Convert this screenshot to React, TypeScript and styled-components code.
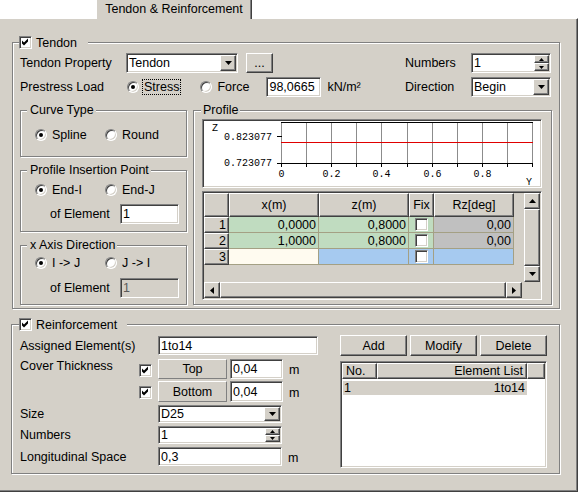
import React from "react";
import styled, { createGlobalStyle, css } from "styled-components";

const FACE = "#d4d0c8";
const SHADOW = "#808080";
const DARK = "#404040";
const GRID_LINE = "#a4a084";

const GlobalStyle = createGlobalStyle`
  html, body { margin: 0; padding: 0; background: #fff; }
  body {
    font-family: "Liberation Sans", Arial, sans-serif;
    font-size: 12.5px;
    color: #000;
  }
  *, *::before, *::after { box-sizing: border-box; }
`;

const raised = css`
  background: ${FACE};
  border: 1px solid;
  border-color: #fff ${DARK} ${DARK} #fff;
  box-shadow: inset -1px -1px ${SHADOW};
`;

const sunken = css`
  border: 1px solid;
  border-color: ${SHADOW} #fff #fff ${SHADOW};
  box-shadow: inset 1px 1px ${DARK}, inset -1px -1px ${FACE};
`;

const Window = styled.div`
  width: 578px;
  height: 492px;
  display: flex;
  flex-direction: column;
  background: #fff;
`;

const TabStrip = styled.div`
  height: 18px;
  flex: none;
  display: flex;
  align-items: flex-end;
  padding-left: 96px;
`;

const Tab = styled.div`
  position: relative;
  z-index: 1;
  width: 156px;
  height: 19px;
  margin-bottom: -1px;
  background: ${FACE};
  border-left: 1px solid #fff;
  border-right: 1px solid ${DARK};
  box-shadow: inset -1px 0 ${SHADOW};
  display: flex;
  align-items: center;
  justify-content: center;
  padding-bottom: 1px;
  white-space: nowrap;
`;

const Panel = styled.div`
  flex: 1;
  background: ${FACE};
  border-top: 1px solid #fff;
  border-right: 1px solid ${DARK};
  border-bottom: 1px solid ${DARK};
  box-shadow: inset -1px -1px ${SHADOW};
  display: flex;
  flex-direction: column;
`;

const Group = styled.fieldset<{ $w: number; $h: number; $pad?: string; $mt?: number; $ml?: number }>`
  margin: ${(p) => p.$mt ?? 0}px 0 0 ${(p) => p.$ml ?? 0}px;
  min-inline-size: 0;
  width: ${(p) => p.$w}px;
  height: ${(p) => p.$h}px;
  padding: ${(p) => p.$pad ?? "0"};
  border: 1px solid ${SHADOW};
  box-shadow: inset 1px 1px #fff, 1px 1px #fff;
  flex: none;
  display: flex;
  flex-direction: column;
`;

const Caption = styled.legend<{ $ml?: number; $pl?: number; $pr?: number }>`
  display: flex;
  align-items: center;
  height: 13px;
  line-height: 13px;
  margin-left: ${(p) => p.$ml ?? 0}px;
  padding: 0 ${(p) => p.$pr ?? 2}px 0 ${(p) => p.$pl ?? 2}px;
  background: ${FACE};
  white-space: nowrap;
`;

const Row = styled.div<{ $h: number; $mt?: number; $ml?: number }>`
  display: flex;
  align-items: center;
  flex: none;
  height: ${(p) => p.$h}px;
  margin-top: ${(p) => p.$mt ?? 0}px;
  margin-left: ${(p) => p.$ml ?? 0}px;
`;

const Column = styled.div<{ $w?: number; $mt?: number }>`
  display: flex;
  flex-direction: column;
  flex: none;
  width: ${(p) => (p.$w ? `${p.$w}px` : "auto")};
  margin-top: ${(p) => p.$mt ?? 0}px;
`;

const Split = styled.div<{ $mt?: number; $gap?: number }>`
  display: flex;
  align-items: flex-start;
  gap: ${(p) => p.$gap ?? 0}px;
  margin-top: ${(p) => p.$mt ?? 0}px;
`;

const Label = styled.span<{ $w?: number; $ml?: number; $self?: string; $mb?: number; $auto?: boolean }>`
  display: block;
  flex: none;
  white-space: nowrap;
  line-height: 14px;
  width: ${(p) => (p.$w ? `${p.$w}px` : "auto")};
  margin-left: ${(p) => (p.$auto ? "auto" : `${p.$ml ?? 0}px`)};
  margin-bottom: ${(p) => p.$mb ?? 0}px;
  align-self: ${(p) => p.$self ?? "auto"};
`;

const FocusText = styled.span<{ $ml?: number }>`
  display: block;
  flex: none;
  margin-left: ${(p) => p.$ml ?? 0}px;
  height: 16px;
  line-height: 14px;
  padding: 0 1px;
  border: 1px dotted #000;
`;

const Field = styled.div<{ $w: number; $h?: number; $ml?: number; $off?: boolean }>`
  ${sunken};
  flex: none;
  width: ${(p) => p.$w}px;
  height: ${(p) => p.$h ?? 20}px;
  margin-left: ${(p) => p.$ml ?? 0}px;
  padding: 1px 1px 1px 2px;
  display: flex;
  align-items: center;
  background: ${(p) => (p.$off ? FACE : "#fff")};
  color: ${(p) => (p.$off ? "#5a5a5a" : "#000")};
`;

const FieldText = styled.span`
  flex: 1;
  white-space: nowrap;
  overflow: hidden;
  line-height: 14px;
`;

const DropBtn = styled.div`
  ${raised};
  flex: none;
  width: 16px;
  height: 100%;
  display: flex;
  align-items: center;
  justify-content: center;
`;

const SpinStack = styled.div`
  flex: none;
  width: 15px;
  height: 100%;
  display: flex;
  flex-direction: column;
`;

const SpinBtn = styled.div`
  ${raised};
  flex: 1;
  display: flex;
  align-items: center;
  justify-content: center;
`;

const Button = styled.div<{ $w: number; $h: number; $ml?: number }>`
  ${raised};
  flex: none;
  width: ${(p) => p.$w}px;
  height: ${(p) => p.$h}px;
  margin-left: ${(p) => p.$ml ?? 0}px;
  display: flex;
  align-items: center;
  justify-content: center;
  white-space: nowrap;
`;

const Tag = styled.div<{ $w: number; $h: number; $ml?: number }>`
  flex: none;
  width: ${(p) => p.$w}px;
  height: ${(p) => p.$h}px;
  margin-left: ${(p) => p.$ml ?? 0}px;
  border: 1px solid;
  border-color: #fff ${SHADOW} ${SHADOW} #fff;
  display: flex;
  align-items: center;
  justify-content: center;
`;

const RadioDot = styled.span<{ $on?: boolean; $ml?: number }>`
  flex: none;
  width: 12px;
  height: 12px;
  margin-left: ${(p) => p.$ml ?? 0}px;
  border-radius: 50%;
  background: #fff;
  border: 1px solid;
  border-color: ${SHADOW} #fff #fff ${SHADOW};
  box-shadow: inset 1px 1px ${DARK}, inset -1px -1px ${FACE};
  display: flex;
  align-items: center;
  justify-content: center;
  &::after {
    content: "";
    width: 4px;
    height: 4px;
    border-radius: 50%;
    background: ${(p) => (p.$on ? "#000" : "transparent")};
  }
`;

const CheckFrame = styled.span<{ $ml?: number; $mt?: number }>`
  ${sunken};
  flex: none;
  width: 13px;
  height: 13px;
  margin-left: ${(p) => p.$ml ?? 0}px;
  margin-top: ${(p) => p.$mt ?? 0}px;
  background: #fff;
  display: flex;
  align-items: center;
  justify-content: center;
`;

const Arrow = ({ dir, small }: { dir: "up" | "down" | "left" | "right"; small?: boolean }) => {
  const a = small ? 5 : 7;
  const b = small ? 3 : 4;
  const vertical = dir === "up" || dir === "down";
  const pts = {
    up: `0,${b} ${a},${b} ${a / 2},0`,
    down: `0,0 ${a},0 ${a / 2},${b}`,
    left: `${b},0 ${b},${a} 0,${a / 2}`,
    right: `0,0 0,${a} ${b},${a / 2}`,
  }[dir];
  return (
    <svg width={vertical ? a : b} height={vertical ? b : a}>
      <polygon points={pts} fill="#000" />
    </svg>
  );
};

const Check = ({ on = true, ml, mt }: { on?: boolean; ml?: number; mt?: number }) => (
  <CheckFrame $ml={ml} $mt={mt}>
    {on && (
      <svg width="9" height="9" viewBox="0 0 9 9">
        <polygon points="1,2.5 3,4.5 7,0.5 7,3.5 3,7.5 1,5.5" fill="#000" />
      </svg>
    )}
  </CheckFrame>
);

const Combo = ({ w, h = 20, value, ml }: { w: number; h?: number; value: string; ml?: number }) => (
  <Field $w={w} $h={h} $ml={ml}>
    <FieldText>{value}</FieldText>
    <DropBtn>
      <Arrow dir="down" />
    </DropBtn>
  </Field>
);

const Spin = ({ w, h = 20, value }: { w: number; h?: number; value: string }) => (
  <Field $w={w} $h={h}>
    <FieldText>{value}</FieldText>
    <SpinStack>
      <SpinBtn>
        <Arrow dir="up" small />
      </SpinBtn>
      <SpinBtn>
        <Arrow dir="down" small />
      </SpinBtn>
    </SpinStack>
  </Field>
);

/* ---------- profile chart ---------- */

const ChartBox = styled.div`
  ${sunken};
  flex: none;
  width: 340px;
  height: 69px;
  padding: 1px;
  background: #fff;
  svg {
    display: block;
  }
`;

const ProfileChart = () => {
  const x0 = 77;
  const x1 = 328;
  const top = 1;
  const bottom = 42;
  const xs = Array.from({ length: 11 }, (_, i) => Math.round(x0 + ((x1 - x0) * i) / 10) + 0.5);
  const mono = { fontFamily: "'Liberation Mono', 'DejaVu Sans Mono', monospace", fontSize: 10 };
  return (
    <svg width="336" height="65" viewBox="0 0 336 65" shapeRendering="crispEdges">
      {xs.map((x, i) => (
        <line key={`g${i}`} x1={x} x2={x} y1={top} y2={bottom} stroke="#8c8c8c" />
      ))}
      <line x1={x0} x2={x1 + 1} y1={top + 0.5} y2={top + 0.5} stroke="#000" />
      <line x1={x0} x2={x1 + 1} y1={bottom + 0.5} y2={bottom + 0.5} stroke="#000" />
      {xs.map((x, i) => (
        <line key={`t${i}`} x1={x} x2={x} y1={bottom} y2={bottom + 4} stroke="#000" />
      ))}
      <line x1={73} x2={78} y1={15.5} y2={15.5} stroke="#000" />
      <line x1={73} x2={78} y1={42.5} y2={42.5} stroke="#000" />
      <line x1={x0} x2={x1 + 1} y1={21.5} y2={21.5} stroke="#e00000" />
      <g style={mono} fill="#000" shapeRendering="auto">
        <text x="8" y="10">Z</text>
        <text x="20" y="18.5">0.823077</text>
        <text x="20" y="44.5">0.723077</text>
        {["0", "0.2", "0.4", "0.6", "0.8"].map((t, i) => (
          <text key={t} x={xs[i * 2]} y="55.5" textAnchor="middle">
            {t}
          </text>
        ))}
        <text x="325" y="63.5" textAnchor="middle">Y</text>
      </g>
    </svg>
  );
};

/* ---------- profile grid ---------- */

const GridFrame = styled.div`
  ${sunken};
  flex: none;
  width: 340px;
  height: 109px;
  margin-top: 3px;
  padding: 1px;
  background: ${FACE};
  display: flex;
  flex-direction: column;
`;

const GridTop = styled.div`
  display: flex;
  height: 89px;
  flex: none;
`;

const GridBottom = styled.div`
  display: flex;
  height: 16px;
  flex: none;
`;

const TableArea = styled.div`
  width: 318px;
  flex: none;
  display: flex;
  flex-direction: column;
`;

const TableRow = styled.div<{ $h: number }>`
  display: flex;
  flex: none;
  height: ${(p) => p.$h}px;
`;

const HeadCell = styled.div<{ $w: number; $right?: boolean }>`
  ${raised};
  flex: none;
  width: ${(p) => p.$w}px;
  height: 100%;
  display: flex;
  align-items: center;
  justify-content: ${(p) => (p.$right ? "flex-end" : "center")};
  padding: 0 2px;
  line-height: 14px;
`;

const Cell = styled.div<{ $w: number; $bg: string; $center?: boolean }>`
  flex: none;
  width: ${(p) => p.$w}px;
  height: 100%;
  background: ${(p) => p.$bg};
  border-right: 1px solid ${GRID_LINE};
  border-bottom: 1px solid ${GRID_LINE};
  display: flex;
  align-items: center;
  justify-content: ${(p) => (p.$center ? "center" : "flex-end")};
  padding-right: ${(p) => (p.$center ? 0 : 2)}px;
  line-height: 14px;
`;

const VScroll = styled.div`
  width: 18px;
  flex: none;
  padding-left: 2px;
  display: flex;
  flex-direction: column;
`;

const HScroll = styled.div`
  width: 318px;
  flex: none;
  display: flex;
`;

const ScrollBtn = styled.div<{ $w: number; $h: number }>`
  ${raised};
  flex: none;
  width: ${(p) => p.$w}px;
  height: ${(p) => p.$h}px;
  display: flex;
  align-items: center;
  justify-content: center;
`;

const Thumb = styled.div`
  ${raised};
  flex: 1;
`;

const GREEN = "#c0dcc0";
const GREY = "#c0c0c0";
const CREAM = "#fffbf0";
const BLUE = "#a6caf0";

const points = [
  { n: 1, x: "0,0000", z: "0,8000", rz: "0,00", fresh: false },
  { n: 2, x: "1,0000", z: "0,8000", rz: "0,00", fresh: false },
  { n: 3, x: "", z: "", rz: "", fresh: true },
];

const ProfileGrid = () => (
  <GridFrame>
    <GridTop>
      <TableArea>
        <TableRow $h={24}>
          <HeadCell $w={25} />
          <HeadCell $w={90}>x(m)</HeadCell>
          <HeadCell $w={90}>z(m)</HeadCell>
          <HeadCell $w={25}>Fix</HeadCell>
          <HeadCell $w={80}>Rz[deg]</HeadCell>
        </TableRow>
        {points.map((p) => (
          <TableRow key={p.n} $h={16}>
            <HeadCell $w={25} $right>
              {p.n}
            </HeadCell>
            <Cell $w={90} $bg={p.fresh ? CREAM : GREEN}>
              {p.x}
            </Cell>
            <Cell $w={90} $bg={p.fresh ? BLUE : GREEN}>
              {p.z}
            </Cell>
            <Cell $w={25} $bg={p.fresh ? BLUE : GREEN} $center>
              <Check on={false} />
            </Cell>
            <Cell $w={80} $bg={p.fresh ? BLUE : GREY}>
              {p.rz}
            </Cell>
          </TableRow>
        ))}
      </TableArea>
      <VScroll>
        <ScrollBtn $w={16} $h={16}>
          <Arrow dir="up" />
        </ScrollBtn>
        <Thumb />
        <ScrollBtn $w={16} $h={16}>
          <Arrow dir="down" />
        </ScrollBtn>
      </VScroll>
    </GridTop>
    <GridBottom>
      <HScroll>
        <ScrollBtn $w={16} $h={16}>
          <Arrow dir="left" />
        </ScrollBtn>
        <Thumb />
        <ScrollBtn $w={16} $h={16}>
          <Arrow dir="right" />
        </ScrollBtn>
      </HScroll>
    </GridBottom>
  </GridFrame>
);

/* ---------- reinforcement list ---------- */

const ListBox = styled.div`
  ${sunken};
  flex: none;
  width: 207px;
  height: 107px;
  margin-top: 5px;
  padding: 1px;
  background: #fff;
  display: flex;
  flex-direction: column;
`;

const ListHead = styled.div`
  display: flex;
  height: 16px;
  flex: none;
`;

const ListHeadCell = styled.div<{ $w?: number; $right?: boolean }>`
  ${raised};
  flex: ${(p) => (p.$w ? "none" : "1")};
  width: ${(p) => (p.$w ? `${p.$w}px` : "auto")};
  height: 100%;
  display: flex;
  align-items: center;
  justify-content: ${(p) => (p.$right ? "flex-end" : "flex-start")};
  padding: 0 3px;
  line-height: 14px;
`;

const ListItem = styled.div`
  display: flex;
  align-items: center;
  justify-content: space-between;
  flex: none;
  width: 184px;
  height: 14px;
  margin: 2px 0 0 1px;
  padding: 0 2px 0 1px;
  background: ${FACE};
  line-height: 14px;
`;

export default function App() {
  return (
    <Window>
      <GlobalStyle />
      <TabStrip>
        <Tab>Tendon &amp; Reinforcement</Tab>
      </TabStrip>
      <Panel>
        <Group $w={548} $h={273} $mt={17} $ml={12} $pad="4px 8px 0 7px">
          <Caption $ml={-1} $pl={0} $pr={11}>
            <Check />
            <Label $ml={4}>Tendon</Label>
          </Caption>

          <Row $h={20}>
            <Label $w={106}>Tendon Property</Label>
            <Combo w={112} value="Tendon" />
            <Button $w={27} $h={20} $ml={8}>
              ...
            </Button>
            <Label $w={66} $auto>
              Numbers
            </Label>
            <Spin w={80} value="1" />
          </Row>

          <Row $h={20} $mt={4}>
            <Label $w={106}>Prestress Load</Label>
            <RadioDot $on $ml={1} />
            <FocusText $ml={3}>Stress</FocusText>
            <RadioDot $ml={19} />
            <Label $w={49} $ml={5}>
              Force
            </Label>
            <Field $w={55}>
              <FieldText>98,0665</FieldText>
            </Field>
            <Label $ml={6}>kN/m²</Label>
            <Label $w={66} $auto>
              Direction
            </Label>
            <Combo w={80} value="Begin" />
          </Row>

          <Split $mt={7} $gap={6}>
            <Column $w={167}>
              <Group $w={167} $h={53} $pad="0 0 0 6px">
                <Caption $pl={3} $pr={2}>
                  Curve Type
                </Caption>
                <Row $h={16} $mt={10} $ml={8}>
                  <RadioDot $on />
                  <Label $w={53} $ml={5}>
                    Spline
                  </Label>
                  <RadioDot />
                  <Label $ml={5}>Round</Label>
                </Row>
              </Group>

              <Group $w={167} $h={68} $mt={7} $pad="0 0 0 6px">
                <Caption $pl={3} $pr={2}>
                  Profile Insertion Point
                </Caption>
                <Row $h={16} $mt={5} $ml={8}>
                  <RadioDot $on />
                  <Label $w={53} $ml={5}>
                    End-I
                  </Label>
                  <RadioDot />
                  <Label $ml={5}>End-J</Label>
                </Row>
                <Row $h={20} $mt={6} $ml={8}>
                  <Label $w={70} $ml={15}>
                    of Element
                  </Label>
                  <Field $w={59}>
                    <FieldText>1</FieldText>
                  </Field>
                </Row>
              </Group>

              <Group $w={167} $h={66} $mt={7} $pad="0 0 0 6px">
                <Caption $pl={3} $pr={2}>
                  x Axis Direction
                </Caption>
                <Row $h={16} $mt={3} $ml={8}>
                  <RadioDot $on />
                  <Label $w={53} $ml={5}>
                    I -&gt; J
                  </Label>
                  <RadioDot />
                  <Label $ml={5}>J -&gt; I</Label>
                </Row>
                <Row $h={20} $mt={7} $ml={8}>
                  <Label $w={70} $ml={15}>
                    of Element
                  </Label>
                  <Field $w={59} $off>
                    <FieldText>1</FieldText>
                  </Field>
                </Row>
              </Group>
            </Column>

            <Group $w={359} $h={201} $pad="2px 0 0 8px">
              <Caption $ml={-1} $pl={2} $pr={2}>
                Profile
              </Caption>
              <ChartBox>
                <ProfileChart />
              </ChartBox>
              <ProfileGrid />
            </Group>
          </Split>
        </Group>

        <Group $w={549} $h={156} $mt={9} $ml={11} $pad="0 8px 0 8px">
          <Caption $ml={-1} $pl={0} $pr={10}>
            <Check />
            <Label $ml={4}>Reinforcement</Label>
          </Caption>

          <Split>
            <Column $w={320}>
              <Row $h={19} $mt={5}>
                <Label $w={138}>Assigned Element(s)</Label>
                <Field $w={160} $h={19}>
                  <FieldText>1to14</FieldText>
                </Field>
              </Row>
              <Row $h={20} $mt={4}>
                <Label $w={119} $self="flex-start">
                  Cover Thickness
                </Label>
                <Check mt={2} />
                <Tag $w={69} $h={20} $ml={6}>
                  Top
                </Tag>
                <Field $w={53} $ml={3}>
                  <FieldText>0,04</FieldText>
                </Field>
                <Label $ml={6} $self="flex-end" $mb={2}>
                  m
                </Label>
              </Row>
              <Row $h={21} $mt={2}>
                <Label $w={119} />
                <Check mt={2} />
                <Tag $w={69} $h={21} $ml={6}>
                  Bottom
                </Tag>
                <Field $w={53} $h={21} $ml={3}>
                  <FieldText>0,04</FieldText>
                </Field>
                <Label $ml={6} $self="flex-end" $mb={2}>
                  m
                </Label>
              </Row>
              <Row $h={18} $mt={3}>
                <Label $w={138}>Size</Label>
                <Combo w={124} h={18} value="D25" />
              </Row>
              <Row $h={18} $mt={3}>
                <Label $w={138}>Numbers</Label>
                <Spin w={124} h={18} value="1" />
              </Row>
              <Row $h={19} $mt={3}>
                <Label $w={138}>Longitudinal Space</Label>
                <Field $w={124} $h={19}>
                  <FieldText>0,3</FieldText>
                </Field>
                <Label $ml={6} $self="flex-end" $mb={1}>
                  m
                </Label>
              </Row>
            </Column>

            <Column $mt={4}>
              <Row $h={21}>
                <Button $w={67} $h={21}>
                  Add
                </Button>
                <Button $w={67} $h={21} $ml={3}>
                  Modify
                </Button>
                <Button $w={67} $h={21} $ml={3}>
                  Delete
                </Button>
              </Row>
              <ListBox>
                <ListHead>
                  <ListHeadCell $w={35}>No.</ListHeadCell>
                  <ListHeadCell $w={150} $right>
                    Element List
                  </ListHeadCell>
                  <ListHeadCell />
                </ListHead>
                <ListItem>
                  <span>1</span>
                  <span>1to14</span>
                </ListItem>
              </ListBox>
            </Column>
          </Split>
        </Group>
      </Panel>
    </Window>
  );
}
